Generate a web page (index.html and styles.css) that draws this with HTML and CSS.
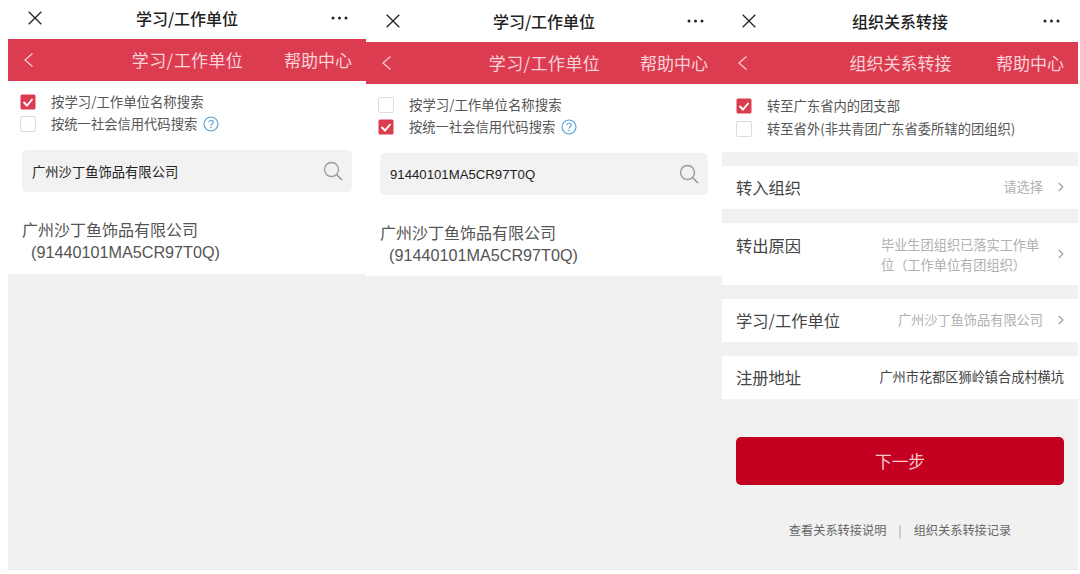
FILE: index.html
```html
<!DOCTYPE html>
<html lang="zh-CN">
<head>
<meta charset="utf-8">
<title>学习/工作单位</title>
<link rel="stylesheet" href="styles.css">
</head>
<body>
<svg class="defs" width="0" height="0" aria-hidden="true">
  <symbol id="close" viewBox="0 0 14 14"><path d="M.7.7 13.300 13.300M13.300.7.7 13.300" fill="none" stroke="#222" stroke-width="1.300"/></symbol>
  <symbol id="more" viewBox="0 0 17 4"><circle cx="2" cy="2" r="1.500" fill="#222"/><circle cx="8.500" cy="2" r="1.500" fill="#222"/><circle cx="15" cy="2" r="1.500" fill="#222"/></symbol>
  <symbol id="back" viewBox="0 0 11 16"><path d="M9.500 1.500 2 8l7.500 6.500" fill="none" stroke="#f6c9cf" stroke-width="1.300"/></symbol>
  <symbol id="check" viewBox="0 0 16 16"><rect x=".5" y=".5" width="15" height="15" rx="1.500" fill="#dc3c50"/><path d="M3.500 8 7 11.500 12.500 5" fill="none" stroke="#fff" stroke-width="1.900"/></symbol>
  <symbol id="help" viewBox="0 0 16 16"><circle cx="8" cy="8" r="7" fill="none" stroke="#4f9fd6" stroke-width="1.100"/><path d="M5.800 6.300C5.900 4.900 6.900 4.300 8 4.300c1.300 0 2.200.8 2.200 1.900 0 1.700-2.200 1.700-2.200 3.500" fill="none" stroke="#4f9fd6" stroke-width="1.100"/><circle cx="8" cy="11.500" r=".8" fill="#4f9fd6"/></symbol>
  <symbol id="search" viewBox="0 0 20 20"><circle cx="8.500" cy="8.500" r="7" fill="none" stroke="#9b9b9b" stroke-width="1.400"/><path d="M13.500 13.500 19 19" fill="none" stroke="#9b9b9b" stroke-width="1.700"/></symbol>
  <symbol id="chev" viewBox="0 0 6 10"><path d="M.8 1 4.800 5 .8 9" fill="none" stroke="#9a9a9a" stroke-width="1.100"/></symbol>
</svg>
<main class="screens">

  <section class="phone phone-first">
    <header class="topbar">
      <svg class="ic-close"><use href="#close"/></svg>
      <h1 class="top-title">学习/工作单位</h1>
      <svg class="ic-more"><use href="#more"/></svg>
    </header>
    <nav class="redbar">
      <svg class="ic-back"><use href="#back"/></svg>
      <span class="red-title title-wide">学习/工作单位</span>
      <span class="red-help">帮助中心</span>
    </nav>
    <div class="white">
      <div class="options">
        <div class="option"><svg class="box"><use href="#check"/></svg><span>按学习/工作单位名称搜索</span></div>
        <div class="option"><span class="box box-empty"></span><span class="opt-tight">按统一社会信用代码搜索</span><svg class="ic-help"><use href="#help"/></svg></div>
      </div>
      <div class="searchbox"><span class="search-text">广州沙丁鱼饰品有限公司</span><svg class="ic-search"><use href="#search"/></svg></div>
      <div class="result"><div>广州沙丁鱼饰品有限公司</div><div class="result-code">(91440101MA5CR97T0Q)</div></div>
    </div>
    <div class="fill"></div>
  </section>

  <section class="phone">
    <header class="topbar">
      <svg class="ic-close"><use href="#close"/></svg>
      <h1 class="top-title">学习/工作单位</h1>
      <svg class="ic-more"><use href="#more"/></svg>
    </header>
    <nav class="redbar">
      <svg class="ic-back"><use href="#back"/></svg>
      <span class="red-title title-wide">学习/工作单位</span>
      <span class="red-help">帮助中心</span>
    </nav>
    <div class="white white-second">
      <div class="options">
        <div class="option"><span class="box box-empty"></span><span>按学习/工作单位名称搜索</span></div>
        <div class="option"><svg class="box"><use href="#check"/></svg><span class="opt-tight">按统一社会信用代码搜索</span><svg class="ic-help"><use href="#help"/></svg></div>
      </div>
      <div class="searchbox"><span class="search-text search-code">91440101MA5CR97T0Q</span><svg class="ic-search"><use href="#search"/></svg></div>
      <div class="result"><div>广州沙丁鱼饰品有限公司</div><div class="result-code">(91440101MA5CR97T0Q)</div></div>
    </div>
    <div class="fill"></div>
  </section>

  <section class="phone">
    <header class="topbar">
      <svg class="ic-close"><use href="#close"/></svg>
      <h1 class="top-title">组织关系转接</h1>
      <svg class="ic-more"><use href="#more"/></svg>
    </header>
    <nav class="redbar">
      <svg class="ic-back"><use href="#back"/></svg>
      <span class="red-title">组织关系转接</span>
      <span class="red-help">帮助中心</span>
    </nav>
    <div class="transfer-options">
      <div class="option"><svg class="box"><use href="#check"/></svg><span>转至广东省内的团支部</span></div>
      <div class="option"><span class="box box-empty"></span><span>转至省外(非共青团广东省委所辖的团组织)</span></div>
    </div>
    <div class="rows">
      <div class="row"><span class="row-label">转入组织</span><span class="row-value">请选择</span><svg class="ic-chev"><use href="#chev"/></svg></div>
      <div class="row row-tall"><span class="row-label">转出原因</span><span class="row-value row-multi">毕业生团组织已落实工作单位（工作单位有团组织）</span><svg class="ic-chev"><use href="#chev"/></svg></div>
      <div class="row"><span class="row-label">学习/工作单位</span><span class="row-value">广州沙丁鱼饰品有限公司</span><svg class="ic-chev"><use href="#chev"/></svg></div>
      <div class="row"><span class="row-label">注册地址</span><span class="row-value row-dark">广州市花都区狮岭镇合成村横坑</span></div>
    </div>
    <div class="actions">
      <button class="next" type="button">下一步</button>
      <div class="links"><span>查看关系转接说明</span><span class="sep">|</span><span>组织关系转接记录</span></div>
    </div>
  </section>

</main>
</body>
</html>
```
FILE: styles.css
```css
* { box-sizing: border-box; }
html, body { margin: 0; padding: 0; background: #fff; }
body {
  width: 1080px;
  height: 574px;
  overflow: hidden;
  font-family: "Noto Sans CJK SC", "Liberation Sans", sans-serif;
  color: #333;
}
.defs { display: block; height: 0; }
.screens {
  display: grid;
  grid-template-columns: 358px 356px 356px;
  height: 570px;
  margin-left: 8px;
}
.phone { display: flex; flex-direction: column; min-width: 0; }

.topbar {
  height: 42px;
  flex: none;
  display: grid;
  grid-template-columns: 1fr auto 1fr;
  align-items: center;
  padding: 0 20px;
}
.phone-first .topbar { height: 39px; padding-bottom: 4px; }
.ic-close { width: 14px; height: 14px; }
.ic-more { width: 17px; height: 4px; justify-self: end; margin-right: -2px; }
.top-title {
  margin: 0;
  font-size: 16px;
  line-height: 20px;
  font-weight: 500;
  color: #222;
}

.redbar {
  height: 42px;
  flex: none;
  background: #dc3c50;
  display: grid;
  grid-template-columns: 1fr auto 1fr;
  align-items: center;
  padding: 0 14px 0 15px;
}
.ic-back { width: 11px; height: 16px; }
.red-title, .red-help {
  font-size: 17px;
  line-height: 22px;
  color: #f8d3d8;
}
.title-wide { letter-spacing: .4px; }
.red-help { justify-self: end; }

.white { background: #fff; flex: none; height: 193px; padding: 12px 14px 0 12px; }
.white-second { height: 192px; }
.options { display: flex; flex-direction: column; gap: 5px; }
.option {
  display: flex;
  align-items: center;
  height: 17px;
  font-size: 13.400px;
  line-height: 17px;
  color: #555;
}
.opt-tight { font-size: 13.300px; }
.box { width: 16px; height: 16px; flex: none; margin-right: 15px; }
.box-empty {
  display: block;
  border: 1px solid #ddd;
  border-radius: 2px;
  background: #fff;
}
.ic-help { width: 16px; height: 16px; margin-left: 6px; }

.searchbox {
  margin: 18px 0 0 2px;
  height: 42px;
  border-radius: 5px;
  background: #f2f2f2;
  display: flex;
  align-items: center;
  justify-content: space-between;
  padding: 0 9px 0 10px;
}
.search-text { font-size: 13.300px; color: #222; }
.search-code { font-family: "Liberation Sans", sans-serif; font-size: 13.200px; }
.ic-search { width: 20px; height: 20px; }

.result {
  margin: 27px 0 0 2px;
  font-size: 16px;
  line-height: 21px;
  color: #555;
}
.result-code { padding-left: 9px; margin-top: 2px; font-family: "Liberation Sans", sans-serif; font-size: 16.200px; }

.fill { flex: 1; background: #f1f1f1; border-bottom: 1px solid #e8e8e8; }

.transfer-options { flex: none; height: 68px; padding: 13px 14px 0 14px; background: #fff; }
.transfer-options .option { margin-bottom: 6px; font-size: 13.300px; }
.rows {
  flex: none;
  display: flex;
  flex-direction: column;
  gap: 14px;
  padding: 14px 0;
  background: #f1f1f1;
}
.row {
  height: 43px;
  background: #fff;
  display: flex;
  align-items: center;
  padding: 0 14px 1px;
}
.row-tall { height: 62px; }
.row-tall .row-label { align-self: flex-start; margin-top: 10px; }
.row-label { font-size: 16.300px; line-height: 24px; color: #444; flex: none; margin-right: auto; }
.row-value { font-size: 13.200px; line-height: 20px; color: #b0b0b0; text-align: right; }
.row-multi { width: 162px; text-align: left; padding-top: 2px; }
.row-dark { color: #444; }
.ic-chev { width: 6px; height: 10px; margin-left: 15px; flex: none; }

.actions {
  flex: 1;
  background: #f1f1f1;
  border-bottom: 1px solid #e8e8e8;
  padding: 24px 14px 0;
  display: flex;
  flex-direction: column;
  align-items: center;
}
.next {
  width: 328px;
  height: 48px;
  border: 0;
  border-radius: 5px;
  background: #c3001f;
  color: #f7c9d0;
  font: inherit;
  font-size: 16.700px;
}
.links {
  margin-top: 36px;
  font-size: 12.200px;
  line-height: 18px;
  color: #666;
  display: flex;
  align-items: center;
  gap: 12px;
}
.sep { color: #999; }
```
